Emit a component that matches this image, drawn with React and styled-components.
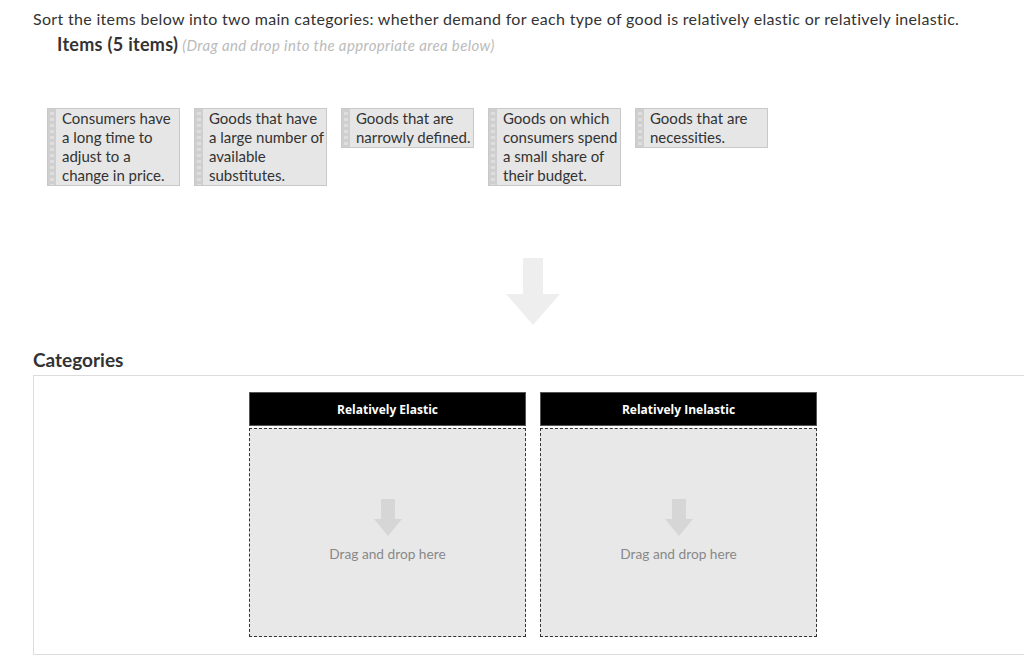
import React from 'react';
import styled, { createGlobalStyle } from 'styled-components';

const GlobalStyle = createGlobalStyle`
  html, body {
    margin: 0;
    padding: 0;
    overflow: hidden;
    background: #fff;
  }
  body {
    font-family: Lato, "Open Sans", sans-serif;
    color: #333;
  }
`;

const Page = styled.div`
  width: 1000px;
  margin-left: 33px;
  padding-top: 9px;
`;

const Prompt = styled.div`
  font-size: 16px;
  line-height: 20px;
  letter-spacing: 0.32px;
  color: #333;
`;

const ItemsTitle = styled.div`
  margin-top: 4px;
  padding-left: 24px;
  font-size: 18px;
  line-height: 22px;
  font-weight: 700;
  letter-spacing: 0.3px;
  color: #333;
`;

const Hint = styled.span`
  margin-left: 4px;
  font-size: 15px;
  font-weight: 400;
  font-style: italic;
  letter-spacing: 0.35px;
  color: #bbb;
`;

const ItemRow = styled.div`
  display: flex;
  align-items: flex-start;
  gap: 14px;
  margin-top: 52px;
  padding-left: 14px;
`;

const Card = styled.div`
  display: flex;
  width: 133px;
  box-sizing: border-box;
  background: #e6e6e6;
  border: 1px solid #c9c9c9;
`;

const Grip = styled.div`
  flex: 0 0 8px;
  background-color: #cfcfcf;
  background-image: repeating-linear-gradient(
    to bottom,
    transparent 0px,
    transparent 3px,
    #dedede 3px,
    #dedede 6px
  );
  background-size: 4px 100%;
  background-repeat: no-repeat;
  background-position: 2px 0;
`;

const CardText = styled.div`
  padding: 0 2px 0 6px;
  font-size: 15px;
  line-height: 19px;
  color: #333;
`;

const BigArrowWrap = styled.div`
  display: flex;
  justify-content: center;
  margin-top: 72px;
`;

const SectionTitle = styled.div`
  margin-top: 24px;
  font-size: 19px;
  line-height: 22px;
  font-weight: 700;
  color: #333;
`;

const Board = styled.div`
  display: flex;
  justify-content: center;
  gap: 14px;
  margin-top: 4px;
  height: 280px;
  box-sizing: border-box;
  padding-top: 16px;
  border: 1px solid #dcdcdc;
`;

const Column = styled.div`
  width: 277px;
  display: flex;
  flex-direction: column;
`;

const ColumnHead = styled.div`
  height: 34px;
  box-sizing: border-box;
  display: flex;
  align-items: center;
  justify-content: center;
  background: #000;
  border: 1px solid #555;
  color: #fff;
  font-family: "Open Sans", sans-serif;
  font-size: 12px;
  font-weight: 700;
`;

const DropZone = styled.div`
  margin-top: 2px;
  height: 209px;
  box-sizing: border-box;
  border: 1px dashed #333;
  background: #e8e8e8;
  display: flex;
  flex-direction: column;
  align-items: center;
  justify-content: center;
  padding-bottom: 4px;
`;

const DropText = styled.div`
  margin-top: 10px;
  font-size: 13.7px;
  line-height: 16px;
  color: #888;
`;

const items = [
  'Consumers have a long time to adjust to a change in price.',
  'Goods that have a large number of available substitutes.',
  'Goods that are narrowly defined.',
  'Goods on which consumers spend a small share of their budget.',
  'Goods that are necessities.',
];

const categories = ['Relatively Elastic', 'Relatively Inelastic'];

const DownArrow = ({ w, h, shaft, headY, color }) => (
  <svg width={w} height={h} viewBox={`0 0 ${w} ${h}`}>
    <rect x={(w - shaft) / 2} y="0" width={shaft} height={headY} fill={color} />
    <polygon points={`0,${headY} ${w},${headY} ${w / 2},${h}`} fill={color} />
  </svg>
);

const App = () => (
  <>
    <GlobalStyle />
    <Page>
      <Prompt>
        Sort the items below into two main categories: whether demand for each type of good is relatively elastic or relatively inelastic.
      </Prompt>
      <ItemsTitle>
        Items (5 items)
        <Hint>(Drag and drop into the appropriate area below)</Hint>
      </ItemsTitle>
      <ItemRow>
        {items.map((text) => (
          <Card key={text}>
            <Grip />
            <CardText>{text}</CardText>
          </Card>
        ))}
      </ItemRow>
      <BigArrowWrap>
        <DownArrow w={54} h={67} shaft={20} headY={36} color="#eeeeee" />
      </BigArrowWrap>
      <SectionTitle>Categories</SectionTitle>
      <Board>
        {categories.map((name) => (
          <Column key={name}>
            <ColumnHead>{name}</ColumnHead>
            <DropZone>
              <DownArrow w={28} h={37} shaft={14} headY={20} color="#d6d6d6" />
              <DropText>Drag and drop here</DropText>
            </DropZone>
          </Column>
        ))}
      </Board>
    </Page>
  </>
);

export default App;
